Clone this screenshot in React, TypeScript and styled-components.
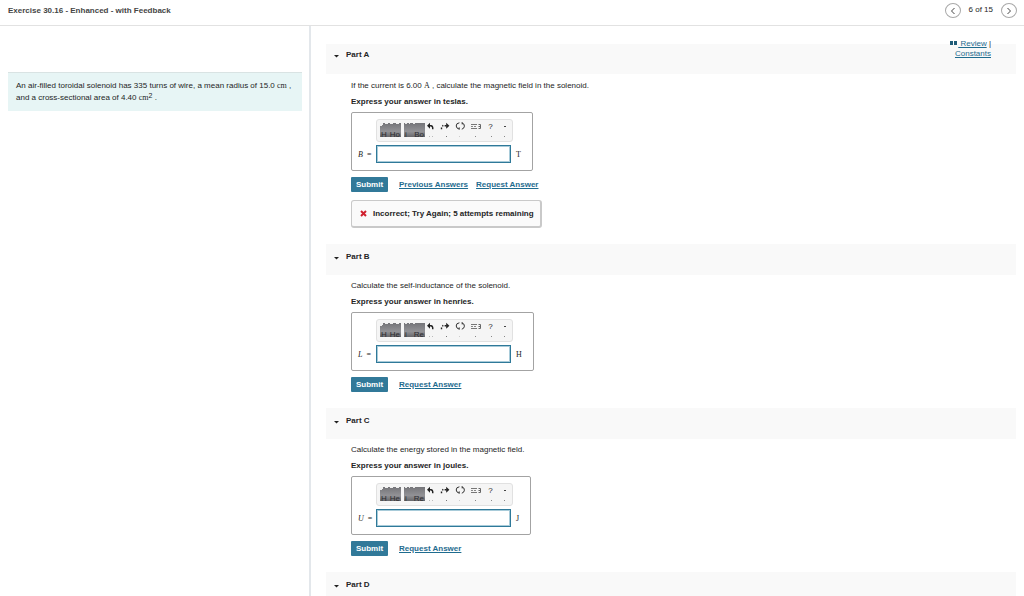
import React from 'react';
import styled, { createGlobalStyle } from 'styled-components';

const GlobalStyle = createGlobalStyle`
  *, *::before, *::after { box-sizing: border-box; }
  html, body { margin: 0; height: 100%; overflow: hidden; }
  #root { height: 100%; }
  body {
    background: #fff;
    color: #252525;
    font: 8px/12px "Liberation Sans", Arial, sans-serif;
  }
  button, input { font: inherit; color: inherit; }
  h1, h2, p { margin: 0; font-size: inherit; }
`;

const Page = styled.div`
  display: flex;
  flex-direction: column;
  height: 100%;
`;

const TopBar = styled.header`
  display: flex;
  flex: none;
  justify-content: space-between;
  align-items: flex-start;
  height: 26px;
  padding: 3px 7px 0 8px;
  border-bottom: 1px solid #e2e2e2;
`;

const Title = styled.h1`
  padding-top: 2px;
  font-weight: bold;
  color: #454545;
`;

const Pager = styled.nav`
  display: flex;
  align-items: flex-start;
  gap: 8px;
  height: 15px;
`;

const PageCount = styled.span`
  padding-top: 1px;
`;

const PagerButton = styled.button`
  display: grid;
  place-items: center;
  width: 16px;
  height: 15px;
  padding: 0;
  border: 1px solid #a9a9a9;
  border-radius: 50%;
  background: #fff;
`;

const Columns = styled.div`
  display: flex;
  flex: 1;
  min-height: 0;
`;

const Side = styled.aside`
  flex: 0 0 311px;
  padding: 46px 7px 0 8px;
  border-right: 2px solid #e3e7eb;
`;

const Problem = styled.p`
  padding: 7px 8px;
  border-top: 1px solid #d9e3e3;
  background: #e7f5f5;
`;

const Main = styled.main`
  flex: 1;
  min-width: 0;
  padding: 18px 8px 0 15px;
  overflow: hidden;
`;

const Part = styled.section`
  margin-bottom: 16px;
`;

const PartHeader = styled.div<{ $compact?: boolean }>`
  display: flex;
  justify-content: space-between;
  align-items: flex-start;
  height: ${(p) => (p.$compact ? 30 : 31)}px;
  padding-top: ${(p) => (p.$compact ? 5 : 7)}px;
  background: #f9f9f9;
`;

const PartToggle = styled.button`
  display: flex;
  align-items: center;
  gap: 7px;
  padding: 0 0 0 8px;
  border: 0;
  background: none;
  font-weight: bold;
`;

const Resources = styled.div`
  display: flex;
  flex-direction: column;
  align-items: flex-end;
  margin: -10px 25px 0 0;
  line-height: 10px;
`;

const PlainLink = styled.a`
  color: #1f6c8f;
  text-decoration: underline;
  text-underline-offset: 1px;
`;

const BoldLink = styled(PlainLink)`
  font-weight: bold;
`;

const PartBody = styled.div<{ $compact?: boolean }>`
  padding: ${(p) => (p.$compact ? 6 : 5)}px 0 0 25px;
`;

const Instruction = styled.p`
  margin: 4px 0 4px;
  font-weight: bold;
`;

const Unit = styled.span`
  font-family: "Liberation Serif", "Times New Roman", serif;
`;

const Square = styled.sup`
  font: 7px/1 "Liberation Sans", Arial, sans-serif;
  vertical-align: 2px;
`;

const AnswerBox = styled.div`
  display: grid;
  grid-template-columns: 18px 135px auto;
  align-items: center;
  width: fit-content;
  height: 59px;
  padding: 5px 11px 6px 6px;
  border: 1px solid #a3a3a3;
  border-radius: 2px;
`;

const Toolbar = styled.div`
  grid-column: 2 / 4;
  display: flex;
  align-items: center;
  width: 137px;
  height: 23px;
  padding: 0 3px 2px;
  border: 1px solid #e1e1e1;
  border-radius: 3px;
  background: #f5f5f5;
`;

const PaletteButton = styled.button`
  display: flex;
  flex: none;
  flex-direction: column;
  justify-content: flex-start;
  width: 21px;
  height: 14px;
  padding: 0;
  overflow: hidden;
  border: 0;
  background: linear-gradient(#747478, #929296 60%, #68686c);
  color: #2c2c30;

  & + & { margin-left: 3px; }
`;

const PaletteArt = styled.svg`
  display: block;
  flex: none;
`;

const PaletteText = styled.span`
  display: flex;
  flex: none;
  justify-content: space-between;
  width: 100%;
  padding: 0 1px;
  line-height: 12px;
`;

const ToolButton = styled.button<{ $width: number }>`
  flex: none;
  width: ${(p) => p.$width}px;
  height: 19px;
  padding: 0;
  border: 0;
  background: none;

  svg { display: block; }
`;

const HelpButton = styled.button`
  flex: none;
  width: 9px;
  height: 19px;
  padding: 0 0 6px;
  border: 0;
  background: linear-gradient(#888, #888) 5px 16px / 1px 1px no-repeat;
`;

const FieldLabel = styled.label`
  display: flex;
  grid-column: 1;
  gap: 4px;
  padding-top: 2px;
  font-family: "Liberation Serif", "Times New Roman", serif;
`;

const Field = styled.input`
  width: 135px;
  height: 18px;
  margin: 0;
  padding: 0 3px;
  border: 1px solid #2f7999;
  outline: 0;
  box-shadow: inset 0 0 0 1px #a8cbd9;
  background: #fff;
`;

const FieldUnit = styled(Unit)`
  width: fit-content;
  padding: 2px 0 0 5px;
`;

const Actions = styled.div`
  display: flex;
  align-items: center;
  gap: 8px;
  margin-top: 6px;
`;

const Submit = styled.button`
  width: 37px;
  height: 15px;
  margin-right: 3px;
  padding: 0;
  border: 0;
  border-radius: 1px;
  background: #317999;
  color: #fff;
  font-weight: bold;
`;

const Feedback = styled.p`
  display: flex;
  align-items: center;
  gap: 6px;
  width: fit-content;
  height: 28px;
  margin-top: 8px;
  padding: 0 6px 0 8px;
  border: 1px solid #c9c9c9;
  border-right-width: 2px;
  border-bottom-width: 2px;
  border-radius: 3px;
  background: #fafafa;
  font-weight: bold;
`;

const Chevron = ({ next }: { next?: boolean }) => (
  <svg width="6" height="8" viewBox="0 0 6 8" fill="none" stroke="#454545" aria-hidden="true">
    <path d={next ? 'M1.5 1 4.5 4 1.5 7' : 'M4.5 1 1.5 4 4.5 7'} />
  </svg>
);

const tools = [
  { name: 'Undo', width: 14, art: <><path d="M4 5.8h2q2 .2 1.8 3.4" fill="none" stroke="#222" strokeWidth="1.4" /><path d="M2 5.8 5 2.8V8.8z" fill="#222" /><path d="M4 16.5h1M7 16.5h1" stroke="#bbb" /></> },
  { name: 'Redo', width: 15, art: <><path d="M2.5 9.2V7.4M3.3 6.2 4.3 5.4M5.6 5.8h2" fill="none" stroke="#222" strokeWidth="1.4" /><path d="M10.4 5.8 7.2 2.8V8.8z" fill="#222" /><path d="M7 16.5h1" stroke="#777" /></> },
  { name: 'Reset', width: 14, art: <><path d="M5.4 2.8Q2 3.2 2.2 6 2.4 8.6 5.4 9.2M7.8 2.8Q10.6 3.6 10.4 6.2 10.2 8.6 7.8 9.2M8.2 2.4v2M5.2 7.4v2" fill="none" stroke="#333" /><path d="M5 16.5h1" stroke="#ccc" /></> },
  { name: 'Keyboard shortcuts', width: 18, art: <><path d="M3 4.5h6M3 8.5h6" stroke="#777" /><path d="M3 6.5h6" stroke="#888" strokeDasharray="2 1" /><path d="M10.5 4.5h2v4h-2M10.5 6.5h2" fill="none" stroke="#666" /><path d="M7 16.5h1" stroke="#888" /></> },
];

const AnswerTools = ({ palettes }: { palettes: string[][] }) => (
  <Toolbar role="toolbar" aria-label="Equation tools">
    {palettes.map((letters, i) => (
      <PaletteButton key={i} type="button">
        <PaletteArt width="21" height="6" viewBox="0 0 21 6" aria-hidden="true">
          {i === 0 ? (
            <path d="M0 0h3v2H2v1H0zM5 0h3v1H5zM10 0h3v1h-3zM16 0h3v1h-3z" fill="#f0f0f0" />
          ) : (
            <path d="M1 0h2v1H1zM5 0h1v1H5zM9 0h2v1H9z" fill="#e8e8e8" />
          )}
        </PaletteArt>
        <PaletteText>{letters.map((l) => <span key={l}>{l}</span>)}</PaletteText>
      </PaletteButton>
    ))}
    {tools.map((t) => (
      <ToolButton key={t.name} type="button" $width={t.width} aria-label={t.name}>
        <svg width={t.width} height="19" viewBox={`0 0 ${t.width} 19`} aria-hidden="true">{t.art}</svg>
      </ToolButton>
    ))}
    <HelpButton type="button">?</HelpButton>
    <ToolButton type="button" $width={14} aria-label="More">
      <svg width="14" height="19" viewBox="0 0 14 19" aria-hidden="true">
        <path d="M9 6.5h2" stroke="#444" />
        <path d="M9 16.5h1" stroke="#888" />
      </svg>
    </ToolButton>
  </Toolbar>
);

type PartData = {
  id: string;
  prompt: React.ReactNode;
  quantity: string;
  symbol: string;
  unit: string;
  palettes: string[][];
  first?: boolean;
};

const parts: PartData[] = [
  {
    id: 'A',
    prompt: <>If the current is 6.00 <Unit>A</Unit> , calculate the magnetic field in the solenoid.</>,
    quantity: 'teslas', symbol: 'B', unit: 'T', palettes: [['H', 'Ho'], ['i', 'Bo']], first: true,
  },
  { id: 'B', prompt: 'Calculate the self-inductance of the solenoid.', quantity: 'henries', symbol: 'L', unit: 'H', palettes: [['H', 'He'], ['i', 'Re']] },
  { id: 'C', prompt: 'Calculate the energy stored in the magnetic field.', quantity: 'joules', symbol: 'U', unit: 'J', palettes: [['H', 'He'], ['i', 'Re']] },
];

const PartHeading = ({ id, compact, children }: { id: string; compact?: boolean; children?: React.ReactNode }) => (
  <PartHeader $compact={compact}>
    <h2>
      <PartToggle type="button">
        <svg width="5" height="10" viewBox="0 0 5 10" aria-hidden="true">
          <path d="M0 5h5L2.5 7.5z" fill="#222" />
        </svg>
        Part {id}
      </PartToggle>
    </h2>
    {children}
  </PartHeader>
);

export default function App() {
  return (
    <Page>
      <GlobalStyle />
      <TopBar>
        <Title>Exercise 30.16 - Enhanced - with Feedback</Title>
        <Pager aria-label="Exercises">
          <PagerButton type="button" aria-label="Previous"><Chevron /></PagerButton>
          <PageCount>6 of 15</PageCount>
          <PagerButton type="button" aria-label="Next"><Chevron next /></PagerButton>
        </Pager>
      </TopBar>
      <Columns>
        <Side>
          <Problem>
            An air-filled toroidal solenoid has 335 turns of wire, a mean radius of 15.0 <Unit>cm</Unit> ,
            and a cross-sectional area of 4.40 <Unit>cm<Square>2</Square></Unit> .
          </Problem>
        </Side>
        <Main>
          {parts.map((p) => (
            <Part key={p.id}>
              <PartHeading id={p.id} compact={p.first}>
                {p.first && (
                  <Resources>
                    <span>
                      <svg width="8" height="6" viewBox="0 0 8 6" aria-hidden="true">
                        <path d="M0 1h3v4H0zM4 1h3v4H4z" fill="#1f5c78" />
                      </svg>
                      <PlainLink href="#review">&nbsp;Review</PlainLink> |
                    </span>
                    <PlainLink href="#constants">Constants</PlainLink>
                  </Resources>
                )}
              </PartHeading>
              <PartBody $compact={p.first}>
                <p>{p.prompt}</p>
                <Instruction>Express your answer in {p.quantity}.</Instruction>
                <AnswerBox>
                  <AnswerTools palettes={p.palettes} />
                  <FieldLabel htmlFor={`answer-${p.id}`}><i>{p.symbol}</i> =</FieldLabel>
                  <Field id={`answer-${p.id}`} type="text" />
                  <FieldUnit>{p.unit}</FieldUnit>
                </AnswerBox>
                <Actions>
                  <Submit type="button">Submit</Submit>
                  {p.first && <BoldLink href="#previous">Previous Answers</BoldLink>}
                  <BoldLink href="#request">Request Answer</BoldLink>
                </Actions>
                {p.first && (
                  <Feedback role="status">
                    <svg width="7" height="7" viewBox="0 0 7 7" aria-hidden="true">
                      <path d="M1 1 6 6M6 1 1 6" stroke="#d0202e" strokeWidth="2" />
                    </svg>
                    Incorrect; Try Again; 5 attempts remaining
                  </Feedback>
                )}
              </PartBody>
            </Part>
          ))}
          <PartHeading id="D" />
        </Main>
      </Columns>
    </Page>
  );
}
